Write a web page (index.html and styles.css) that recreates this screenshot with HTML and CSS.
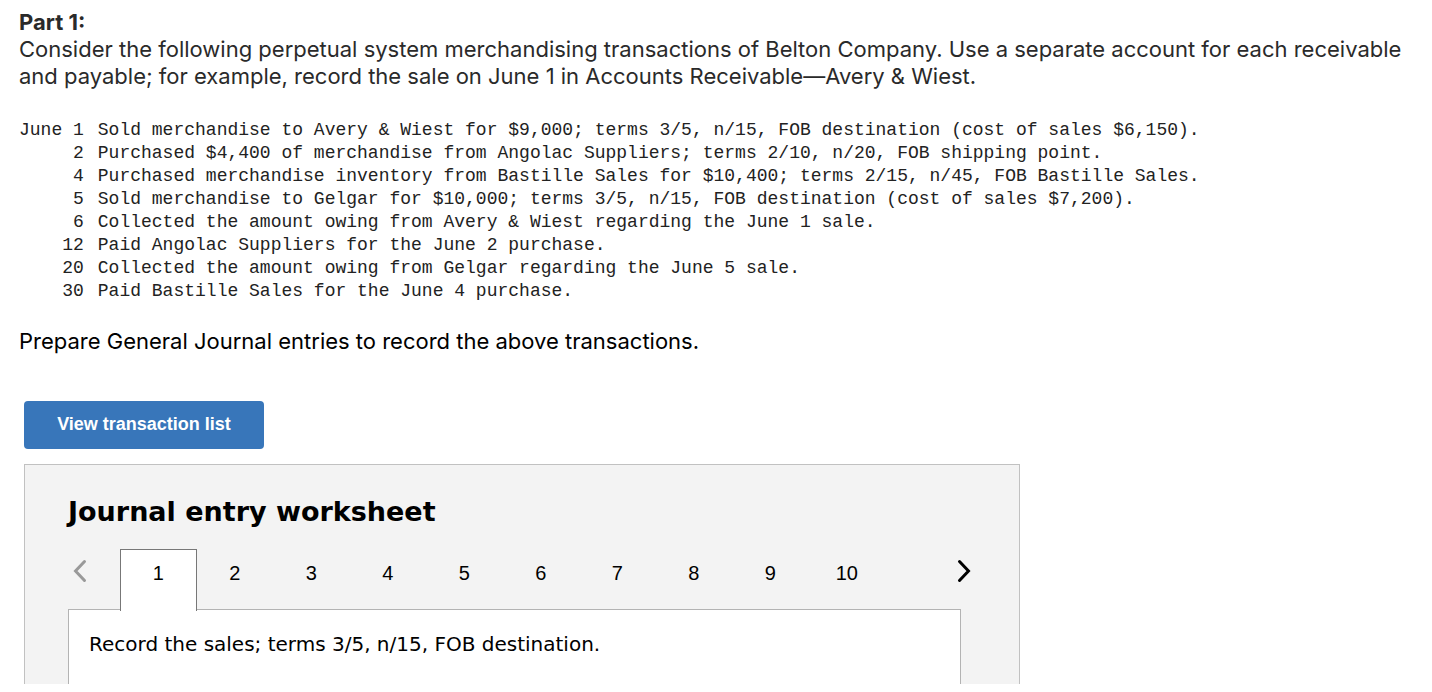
FILE: index.html
```
<!DOCTYPE html>
<html lang="en">
<head>
  <meta charset="UTF-8" />
  <meta name="viewport" content="width=device-width, initial-scale=1.0"/>
  <title>Journal entry worksheet - Belton Company</title>
  <link rel="stylesheet" href="styles.css">
</head>
<body>

  <section class="question">
    <h1>Part 1:</h1>
    <p>Consider the following perpetual system merchandising transactions of Belton Company. Use a separate account for each receivable and payable; for example, record the sale on June 1 in Accounts Receivable—Avery &amp; Wiest.</p>

    <table class="transactions">
      <tbody>
        <tr><th scope="row">June 1</th><td>Sold merchandise to Avery &amp; Wiest for $9,000; terms 3/5, n/15, FOB destination (cost of sales $6,150).</td></tr>
        <tr><th scope="row">2</th><td>Purchased $4,400 of merchandise from Angolac Suppliers; terms 2/10, n/20, FOB shipping point.</td></tr>
        <tr><th scope="row">4</th><td>Purchased merchandise inventory from Bastille Sales for $10,400; terms 2/15, n/45, FOB Bastille Sales.</td></tr>
        <tr><th scope="row">5</th><td>Sold merchandise to Gelgar for $10,000; terms 3/5, n/15, FOB destination (cost of sales $7,200).</td></tr>
        <tr><th scope="row">6</th><td>Collected the amount owing from Avery &amp; Wiest regarding the June 1 sale.</td></tr>
        <tr><th scope="row">12</th><td>Paid Angolac Suppliers for the June 2 purchase.</td></tr>
        <tr><th scope="row">20</th><td>Collected the amount owing from Gelgar regarding the June 5 sale.</td></tr>
        <tr><th scope="row">30</th><td>Paid Bastille Sales for the June 4 purchase.</td></tr>
      </tbody>
    </table>

    <p class="task">Prepare General Journal entries to record the above transactions.</p>
  </section>

  <main class="answer">
    <button type="button" class="list-btn">View transaction list</button>

    <section class="worksheet">
      <h2>Journal entry worksheet</h2>

      <div class="pager">
        <button type="button" class="arrow prev" aria-label="Previous" disabled>
          <svg width="16" height="24" viewBox="0 0 16 24"><path d="M12.5 2.5 L3.5 12 L12.5 21.5"/></svg>
        </button>
        <div class="tabs" role="tablist">
          <button type="button" role="tab" class="tab active" aria-selected="true">1</button>
          <button type="button" role="tab" class="tab">2</button>
          <button type="button" role="tab" class="tab">3</button>
          <button type="button" role="tab" class="tab">4</button>
          <button type="button" role="tab" class="tab">5</button>
          <button type="button" role="tab" class="tab">6</button>
          <button type="button" role="tab" class="tab">7</button>
          <button type="button" role="tab" class="tab">8</button>
          <button type="button" role="tab" class="tab">9</button>
          <button type="button" role="tab" class="tab">10</button>
        </div>
        <button type="button" class="arrow next" aria-label="Next">
          <svg width="16" height="24" viewBox="0 0 16 24"><path d="M3.5 2.5 L12.5 12 L3.5 21.5"/></svg>
        </button>
      </div>

      <div class="entry" role="tabpanel">
        <p>Record the sales; terms 3/5, n/15, FOB destination.</p>
      </div>
    </section>
  </main>

</body>
</html>
```
FILE: styles.css
```
* {
  box-sizing: border-box;
}

body {
  display: flex;
  flex-direction: column;
  height: 100vh;
  margin: 0;
  padding-bottom: 8px;
  overflow: hidden;
  background-color: white;
  color: black;
}

.question {
  padding: 9px 19px 0;
  font-family: Inter, "Open Sans", sans-serif;
  font-size: 22px;
  line-height: 27px;
  color: #2a2a2a;
}

.question h1,
.question p {
  margin: 0;
  font-size: 22px;
}

.question h1 {
  font-weight: 700;
}

.question .task {
  color: black;
}

.transactions {
  margin: 29px 0 25px;
  border-collapse: collapse;
  font-family: "Liberation Mono", monospace;
  font-size: 18px;
  line-height: 23px;
  color: #222;
}

.transactions th,
.transactions td {
  padding: 0;
  font-weight: 400;
  text-align: left;
}

.transactions th {
  padding-right: 14px;
  text-align: right;
  white-space: nowrap;
}

.answer {
  display: flex;
  flex: 1;
  flex-direction: column;
  align-items: flex-start;
  gap: 15px;
  padding: 46px 24px 0;
}

.list-btn {
  width: 240px;
  height: 48px;
  padding-bottom: 2px;
  border: none;
  border-radius: 4px;
  background-color: #3876ba;
  color: white;
  font-family: "Liberation Sans", Arial, sans-serif;
  font-size: 18px;
  font-weight: bold;
  cursor: pointer;
}

.worksheet {
  display: flex;
  flex: 1;
  flex-direction: column;
  width: 100%;
  max-width: 996px;
  padding: 31px 43px 0;
  border: 1px solid #c1c1c1;
  border-bottom: none;
  background-color: #f3f3f3;
  font-family: "DejaVu Sans", Verdana, sans-serif;
}

.worksheet h2 {
  margin: 0 0 21px;
  font-size: 27px;
  line-height: 32px;
}

.pager {
  display: flex;
  align-items: flex-start;
}

.arrow {
  display: flex;
  padding: 10px 4px;
  border: none;
  background: none;
}

.arrow path {
  fill: none;
  stroke: black;
  stroke-width: 3;
  stroke-linecap: round;
}

.arrow.prev path {
  stroke: #999;
}

.tabs {
  display: flex;
  flex: 1;
  max-width: 765px;
  margin-left: 28px;
}

.tab {
  flex: 1;
  height: 62px;
  margin-bottom: -2px;
  padding: 0 0 14px;
  border: 1px solid transparent;
  border-bottom: none;
  background: none;
  font-family: "Liberation Sans", Arial, sans-serif;
  font-size: 20px;
  cursor: pointer;
}

.tab.active {
  position: relative;
  border-color: #777;
  background-color: white;
}

.arrow.next {
  margin-left: auto;
}

.entry {
  flex: 1;
  margin-right: 15px;
  padding: 20px;
  border: 1px solid #b3b3b3;
  border-bottom: none;
  background-color: white;
}

.entry p {
  margin: 0;
  font-size: 20px;
  line-height: 28px;
}
```
